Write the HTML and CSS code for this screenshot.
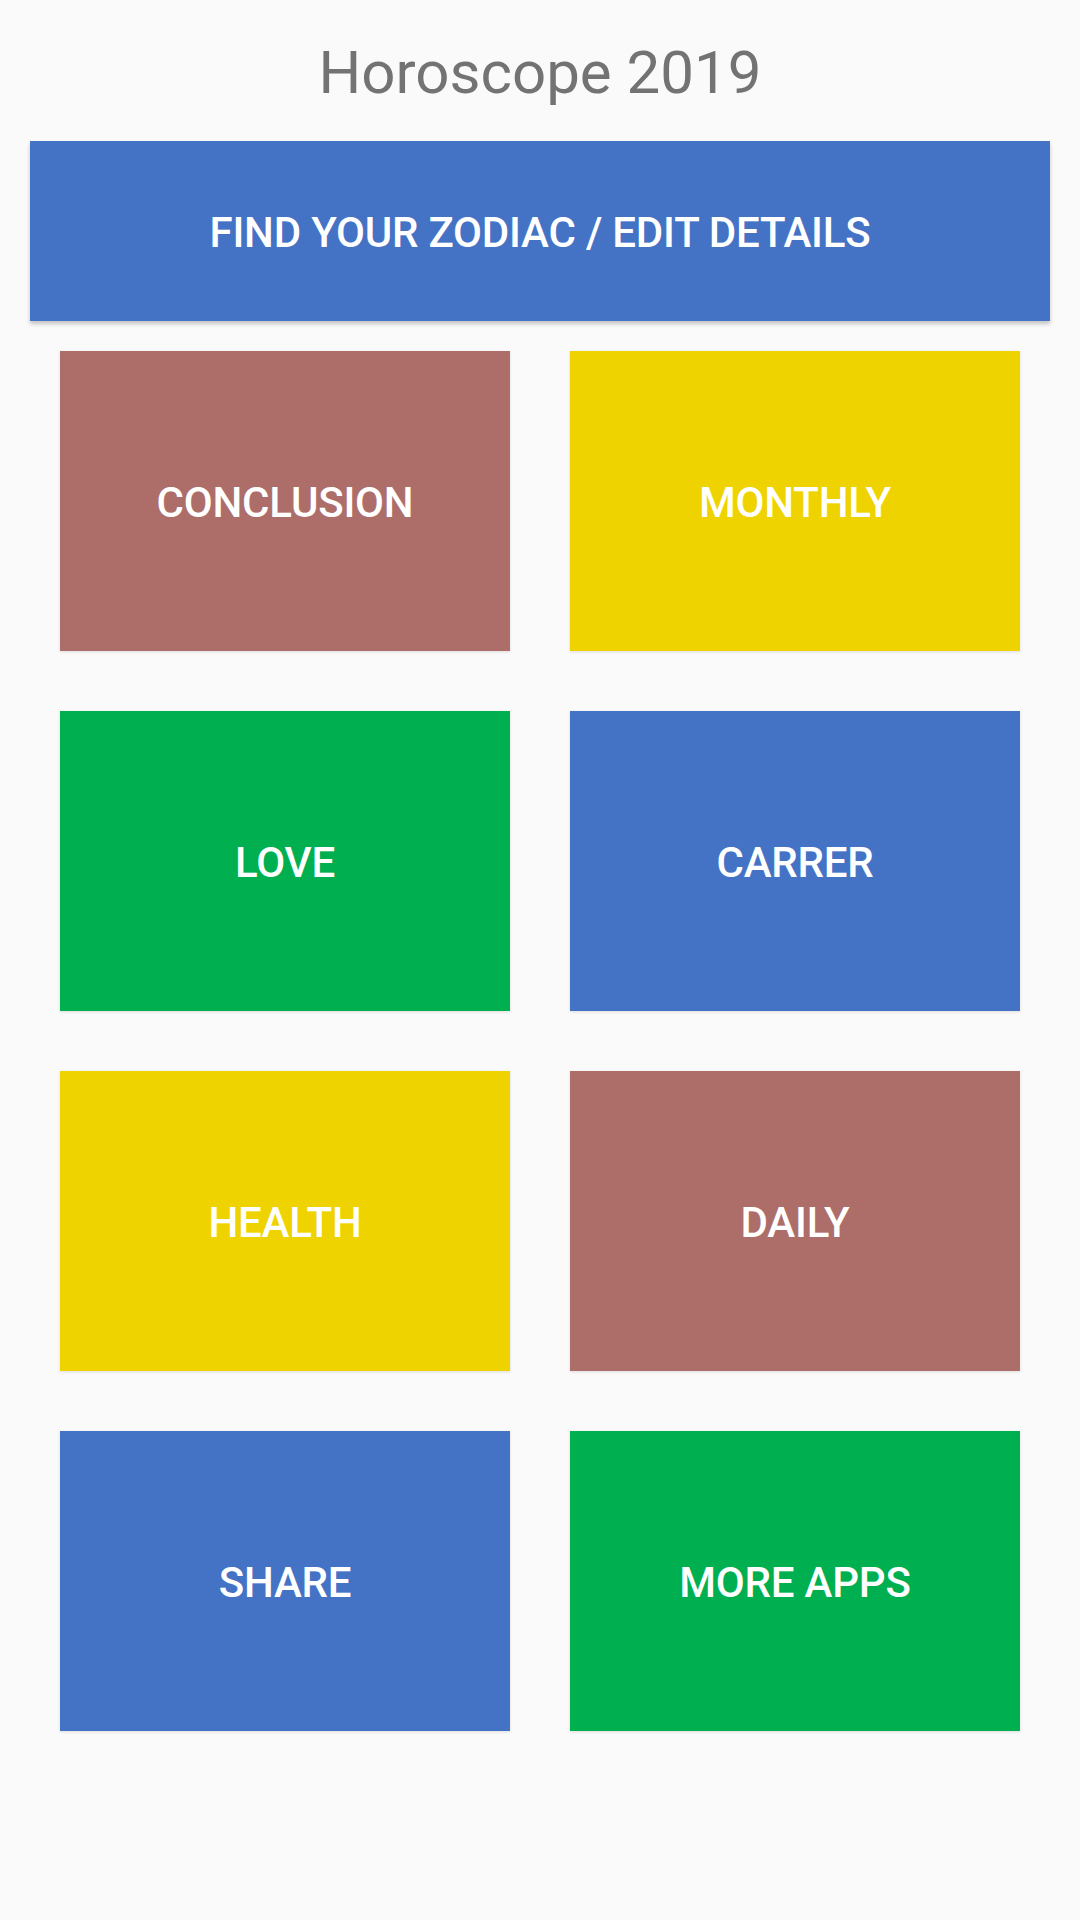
FILE: index.html
```html
<!DOCTYPE html>
<html lang="en">
<head>
    <meta charset="UTF-8">
    <meta name="viewport" content="width=device-width, initial-scale=1.0">
    <title>Horoscope 2019</title>
    <link rel="stylesheet" href="styles.css">
</head>
<body>
    <div class="screen">
        <h1 class="title">Horoscope 2019</h1>

        <button class="find-btn">Find your zodiac / edit details</button>

        <div class="menu-grid">
            <button class="tile brown">Conclusion</button>
            <button class="tile yellow">Monthly</button>
            <button class="tile green">Love</button>
            <button class="tile blue">Carrer</button>
            <button class="tile yellow">Health</button>
            <button class="tile brown">Daily</button>
            <button class="tile blue">Share</button>
            <button class="tile green">More apps</button>
        </div>
    </div>
</body>
</html>
```

FILE: styles.css
```css
body, html {
    margin: 0;
    padding: 0;
    background-color: #fafafa;
    font-family: Roboto, "Noto Sans", sans-serif;
}

.screen {
    width: 1080px;
    height: 1920px;
    padding-top: 38px;
    box-sizing: border-box;
}

.title {
    margin: 0;
    text-align: center;
    font-size: 60px;
    font-weight: 400;
    line-height: 70px;
    color: #737373;
}

button {
    font-family: Roboto, "Noto Sans", sans-serif;
    font-weight: 500;
    font-size: 42px;
    letter-spacing: -0.2px;
    color: #ffffff;
    text-transform: uppercase;
    border: none;
    padding: 3px 0 0;
    cursor: pointer;
}

.find-btn {
    display: block;
    width: 1020px;
    height: 180px;
    margin: 33px 30px 0;
    background-color: #4473c5;
    box-shadow: 0 3px 4px rgba(0, 0, 0, 0.22);
}

.menu-grid {
    display: grid;
    grid-template-columns: 450px 450px;
    grid-auto-rows: 300px;
    gap: 60px;
    padding: 30px 60px 0;
}

.tile {
    width: 100%;
    height: 100%;
    box-shadow: 0 1px 3px rgba(0, 0, 0, 0.12);
}

.brown { background-color: #ad6e6a; }
.yellow { background-color: #efd300; }
.green { background-color: #00af50; }
.blue { background-color: #4473c5; }
```
